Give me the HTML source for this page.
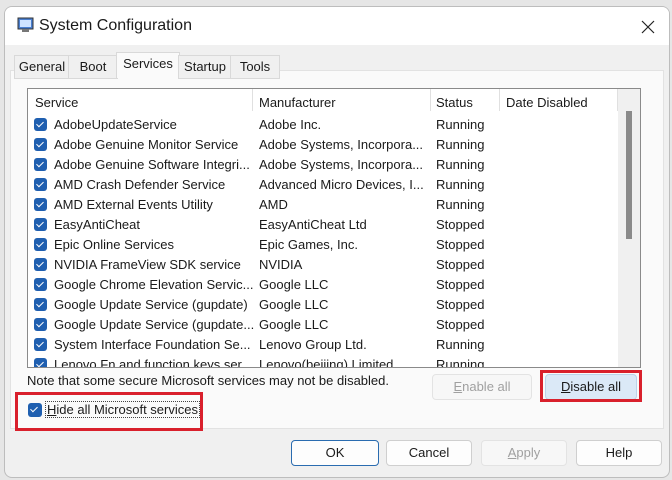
<!DOCTYPE html>
<html><head><style>
body{margin:0;width:672px;height:480px;background:#e6e6e6;font-family:"Liberation Sans",sans-serif;font-size:13px;color:#1a1a1a;position:relative;overflow:hidden}
.win{position:absolute;left:4px;top:6px;width:664px;height:470px;background:#f0f0f0;border:1px solid #bdbdbd;border-radius:8px;overflow:hidden}
.title{position:absolute;left:0;top:0;width:100%;height:38px;background:#fff}
.a{position:absolute;white-space:nowrap}
.tab{position:absolute;top:48px;height:22px;border:1px solid #d9d9d9;background:#f0f0f0;line-height:22px;font-size:13px;text-align:center}
.panel{position:absolute;left:10px;top:70px;width:652px;height:357px;background:#fafafa;border:1px solid #e2e2e2}
.list{position:absolute;left:27px;top:88px;width:612px;height:278px;background:#fff;border:1px solid #8a8a8a;overflow:hidden}
.cb{position:absolute;width:13px;height:13px;background:#1f5fb0;border-radius:3px}
.cb:after{content:"";position:absolute;left:4px;top:2px;width:3px;height:6px;border:solid #fff;border-width:0 1.3px 1.3px 0;transform:rotate(45deg)}
.btn{position:absolute;height:24px;border:1px solid #cfcfcf;background:#fdfdfd;border-radius:4px;text-align:center;line-height:24px;font-size:13px}
.red{position:absolute;border:3px solid #d9202c}
</style></head><body>
<div class="win">
<div class="title">
<svg class="a" style="left:12px;top:10px" width="18" height="16"><rect x="1" y="1" width="15" height="11" fill="#4a7fd0" stroke="#333" stroke-width="1"/><rect x="3" y="3" width="11" height="7" fill="#cfe3ff"/><rect x="5" y="12" width="7" height="3" fill="#777"/></svg>
<div class="a" style="left:34px;top:10px;font-size:16px">System Configuration</div>
<svg class="a" style="left:636px;top:13px" width="14" height="14"><path d="M1 1L13 13M13 1L1 13" stroke="#222" stroke-width="1.2"/></svg>
</div>
</div>
<div class="panel"></div>
<div class="tab" style="left:14px;width:54px;top:55px">General</div>
<div class="tab" style="left:68px;width:48px;top:55px">Boot</div>
<div class="tab" style="left:116px;width:62px;top:52px;height:25px;background:#fafafa;border-bottom:none">Services</div>
<div class="tab" style="left:178px;width:52px;top:55px">Startup</div>
<div class="tab" style="left:230px;width:48px;top:55px">Tools</div>
<div class="list">
<div style="position:absolute;left:224px;top:0;width:1px;height:22px;background:#e0e0e0"></div>
<div style="position:absolute;left:402px;top:0;width:1px;height:22px;background:#e0e0e0"></div>
<div style="position:absolute;left:471px;top:0;width:1px;height:22px;background:#e0e0e0"></div>
<div style="position:absolute;left:589px;top:0;width:1px;height:22px;background:#e0e0e0"></div>
<div style="position:absolute;left:590px;top:0;width:22px;height:278px;background:#f0f0f0"></div>
<div style="position:absolute;left:598px;top:22px;width:6px;height:128px;background:#8a8a8a"></div>
<div class="a" style="left:7px;top:6px">Service</div><div class="a" style="left:231px;top:6px">Manufacturer</div><div class="a" style="left:408px;top:6px">Status</div><div class="a" style="left:478px;top:6px">Date Disabled</div>
<div id="rows"></div>
</div>
<script>
var r=[["AdobeUpdateService","Adobe Inc.","Running"],["Adobe Genuine Monitor Service","Adobe Systems, Incorpora...","Running"],["Adobe Genuine Software Integri...","Adobe Systems, Incorpora...","Running"],["AMD Crash Defender Service","Advanced Micro Devices, I...","Running"],["AMD External Events Utility","AMD","Running"],["EasyAntiCheat","EasyAntiCheat Ltd","Stopped"],["Epic Online Services","Epic Games, Inc.","Stopped"],["NVIDIA FrameView SDK service","NVIDIA","Stopped"],["Google Chrome Elevation Servic...","Google LLC","Stopped"],["Google Update Service (gupdate)","Google LLC","Stopped"],["Google Update Service (gupdate...","Google LLC","Stopped"],["System Interface Foundation Se...","Lenovo Group Ltd.","Running"],["Lenovo Fn and function keys ser...","Lenovo(beijing) Limited","Running"]];
var h='';r.forEach(function(x,i){var y=28+i*20;h+='<div class="cb" style="left:6px;top:'+(y+1)+'px"></div><div class="a" style="left:26px;top:'+y+'px">'+x[0]+'</div><div class="a" style="left:231px;top:'+y+'px">'+x[1]+'</div><div class="a" style="left:408px;top:'+y+'px">'+x[2]+'</div>';});
document.getElementById('rows').innerHTML=h;
</script>
<div class="a" style="left:27px;top:373px">Note that some secure Microsoft services may not be disabled.</div>
<div class="btn" style="left:432px;top:374px;width:98px;color:#a0a0a0;background:#f7f7f7;border-color:#e3e3e3"><u>E</u>nable all</div>
<div class="btn" style="left:545px;top:374px;width:90px;background:#dbe9f7;border-color:#bcd3ea"><u>D</u>isable all</div>
<div class="red" style="left:540px;top:370px;width:96px;height:26px"></div>
<div class="cb" style="left:28px;top:403px;width:14px;height:14px"></div>
<div class="a" style="left:45px;top:401px;border:1px dotted #444;padding:0 1px"><u>H</u>ide all Microsoft services</div>
<div class="red" style="left:15px;top:392px;width:182px;height:33px"></div>
<div class="btn" style="left:291px;top:440px;width:86px;border-color:#2a6cb0">OK</div>
<div class="btn" style="left:386px;top:440px;width:84px">Cancel</div>
<div class="btn" style="left:481px;top:440px;width:84px;color:#a0a0a0;background:#f7f7f7;border-color:#e3e3e3"><u>A</u>pply</div>
<div class="btn" style="left:576px;top:440px;width:84px">Help</div>
</body></html>
